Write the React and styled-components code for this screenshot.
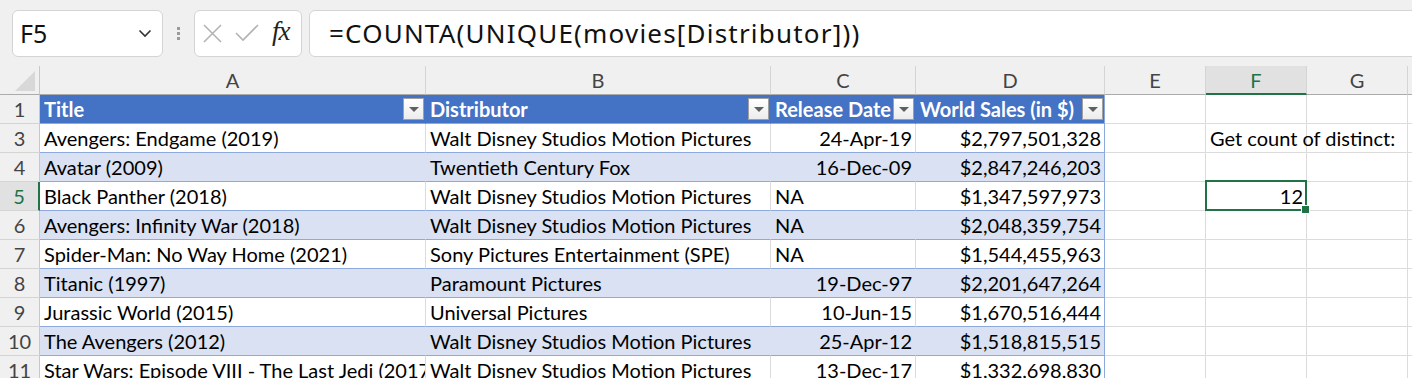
import React from 'react';
import styled, { createGlobalStyle } from 'styled-components';

const GlobalStyle = createGlobalStyle`
  html, body { margin: 0; padding: 0; background: #fff; overflow: hidden; }
  body { font-family: Lato, "Liberation Sans", sans-serif; }
`;

const GREEN = '#217346';

const rows = [
  ['3', 'Avengers: Endgame (2019)', 'Walt Disney Studios Motion Pictures', '24-Apr-19', '$2,797,501,328'],
  ['4', 'Avatar (2009)', 'Twentieth Century Fox', '16-Dec-09', '$2,847,246,203'],
  ['5', 'Black Panther (2018)', 'Walt Disney Studios Motion Pictures', 'NA', '$1,347,597,973'],
  ['6', 'Avengers: Infinity War (2018)', 'Walt Disney Studios Motion Pictures', 'NA', '$2,048,359,754'],
  ['7', 'Spider-Man: No Way Home (2021)', 'Sony Pictures Entertainment (SPE)', 'NA', '$1,544,455,963'],
  ['8', 'Titanic (1997)', 'Paramount Pictures', '19-Dec-97', '$2,201,647,264'],
  ['9', 'Jurassic World (2015)', 'Universal Pictures', '10-Jun-15', '$1,670,516,444'],
  ['10', 'The Avengers (2012)', 'Walt Disney Studios Motion Pictures', '25-Apr-12', '$1,518,815,515'],
  ['11', 'Star Wars: Episode VIII - The Last Jedi (2017)', 'Walt Disney Studios Motion Pictures', '13-Dec-17', '$1,332,698,830'],
];

const Toolbar = styled.div`
  display: flex;
  align-items: center;
  height: 66px;
  padding-left: 12px;
  background: #f0f0f0;
  overflow: hidden;
`;

const Box = styled.div`
  box-sizing: border-box;
  height: 47px;
  background: #fff;
  border: 1px solid #d4d4d4;
  border-radius: 6px;
  display: flex;
  align-items: center;
`;

const NameBox = styled(Box)`
  width: 151px;
  justify-content: space-between;
  padding: 0 10px 0 7px;
  font-family: "Noto Sans", "Open Sans", sans-serif;
  font-size: 25px;
  color: #111;
`;

const Dots = styled.div`
  display: flex;
  flex-direction: column;
  gap: 2px;
  margin: 0 14px;
  span { width: 3px; height: 3px; background: #9a9a9a; }
`;

const FxBox = styled(Box)`
  width: 108px;
  padding: 0 6px 0 8px;
  gap: 13px;
  margin-right: 7px;
`;

const Fx = styled.span`
  font-family: "Liberation Serif", "DejaVu Serif", serif;
  font-style: italic;
  font-size: 27px;
  color: #222;
  letter-spacing: -1px;
  margin-top: -4px;
`;

const FormulaBox = styled(Box)`
  flex: 1;
  margin-right: -10px;
  padding-left: 19px;
  font-family: "Noto Sans", "Open Sans", sans-serif;
  font-size: 26px;
  letter-spacing: 1.2px;
  color: #111;
  white-space: nowrap;
`;

const Sheet = styled.div`
  display: grid;
  grid-template-columns: 40px 386px 345px 145px 189px 101px 101px 101px 1fr;
  grid-auto-rows: 29px;
`;

const Corner = styled.div`
  box-sizing: border-box;
  background: #f0f0f0;
  border-right: 1px solid #c8c8c8;
  border-bottom: 1px solid #ababab;
  display: flex;
  align-items: flex-end;
  justify-content: flex-end;
  padding: 0 4px 3px 0;
`;

const ColHead = styled.div`
  box-sizing: border-box;
  display: flex;
  align-items: center;
  justify-content: center;
  font-size: 20px;
  color: ${p => (p.$active ? GREEN : '#444')};
  background: ${p => (p.$active ? '#e1e1e1' : '#f0f0f0')};
  border-right: 1px solid #d4d4d4;
  border-bottom: ${p => (p.$active ? `2px solid ${GREEN}` : '1px solid #ababab')};
`;

const RowHead = styled.div`
  box-sizing: border-box;
  display: flex;
  align-items: center;
  justify-content: center;
  font-size: 20px;
  color: ${p => (p.$active ? GREEN : '#444')};
  background: ${p => (p.$active ? '#e1e1e1' : '#f0f0f0')};
  border-right: ${p => (p.$active ? `2px solid ${GREEN}` : '1px solid #c8c8c8')};
  border-bottom: 1px solid #d4d4d4;
`;

const Cell = styled.div`
  position: ${p => (p.$active ? 'relative' : 'static')};
  z-index: ${p => (p.$active ? 2 : 'auto')};
  box-sizing: border-box;
  display: flex;
  align-items: center;
  justify-content: ${p => (p.$right ? 'flex-end' : 'flex-start')};
  padding: 0 3px 0 4px;
  white-space: nowrap;
  overflow: ${p => (p.$spill ? 'visible' : 'hidden')};
  font-size: 20px;
  color: #000;
  background: ${p => (p.$band ? '#d9e1f2' : 'transparent')};
  border-right: 1px solid ${p => (p.$edge ? '#8ea9db' : p.$band ? '#d9e1f2' : '#dcdcdc')};
  border-bottom: 1px solid ${p => (p.$table ? '#8ea9db' : '#dcdcdc')};
`;

const HeadCell = styled.div`
  box-sizing: border-box;
  display: flex;
  align-items: center;
  padding: 0 1px 0 4px;
  background: #4472c4;
  color: #fff;
  font-weight: 700;
  font-size: 20px;
  white-space: nowrap;
  overflow: hidden;
  border-right: 1px solid ${p => (p.$edge ? '#8ea9db' : '#4472c4')};
  border-bottom: 1px solid #8ea9db;
`;

const HeadLabel = styled.span`
  flex: 1;
  overflow: hidden;
`;

const FilterButton = styled.div`
  flex: none;
  box-sizing: border-box;
  width: 21px;
  height: 22px;
  border: 1px solid #a0a0a0;
  background: linear-gradient(#ffffff, #ececec);
  display: flex;
  align-items: center;
  justify-content: center;
  &::after {
    content: '';
    border-left: 5px solid transparent;
    border-right: 5px solid transparent;
    border-top: 5px solid #606060;
  }
`;

const Selection = styled.div`
  position: absolute;
  left: -1px;
  top: -2px;
  right: -1px;
  bottom: -1px;
  border: 2px solid ${GREEN};
  pointer-events: none;
`;

const Handle = styled.div`
  position: absolute;
  right: -5px;
  bottom: -5px;
  width: 7px;
  height: 7px;
  background: ${GREEN};
  border: 1px solid #fff;
`;

export default function App() {
  const letters = ['A', 'B', 'C', 'D', 'E', 'F', 'G', ''];
  const headers = ['Title', 'Distributor', 'Release Date', 'World Sales (in $)'];
  return (
    <>
      <GlobalStyle />
      <Toolbar>
        <NameBox>
          <span>F5</span>
          <svg width="14" height="9" viewBox="0 0 14 9">
            <path d="M1.5 1.5 L7 7 L12.5 1.5" fill="none" stroke="#333" strokeWidth="1.6" />
          </svg>
        </NameBox>
        <Dots><span /><span /><span /></Dots>
        <FxBox>
          <svg width="19" height="19" viewBox="0 0 19 19">
            <path d="M1 1 L18 18 M18 1 L1 18" stroke="#b3b3b3" strokeWidth="1.6" fill="none" />
          </svg>
          <svg width="24" height="18" viewBox="0 0 24 18">
            <path d="M1 9 L8 16 L23 1" stroke="#b3b3b3" strokeWidth="1.6" fill="none" />
          </svg>
          <Fx>fx</Fx>
        </FxBox>
        <FormulaBox>=COUNTA(UNIQUE(movies[Distributor]))</FormulaBox>
      </Toolbar>

      <Sheet>
        <Corner>
          <svg width="20" height="20" viewBox="0 0 20 20">
            <path d="M20 0 L20 20 L0 20 Z" fill="#d8d8d8" />
          </svg>
        </Corner>
        {letters.map((l, i) => (
          <ColHead key={i} $active={l === 'F'}>{l}</ColHead>
        ))}

        <RowHead>1</RowHead>
        {headers.map((h, i) => (
          <HeadCell key={h} $edge={i === 3}>
            <HeadLabel>{h}</HeadLabel>
            <FilterButton />
          </HeadCell>
        ))}
        <Cell />
        <Cell />
        <Cell />
        <Cell />

        {rows.map(([n, title, dist, date, sales], idx) => {
          const band = idx % 2 === 1;
          const isNA = date === 'NA';
          const active = n === '5';
          return (
            <React.Fragment key={n}>
              <RowHead $active={active}>{n}</RowHead>
              <Cell $table $band={band}>{title}</Cell>
              <Cell $table $band={band}>{dist}</Cell>
              <Cell $table $band={band} $right={!isNA}>{date}</Cell>
              <Cell $table $band={band} $edge $right>{sales}</Cell>
              <Cell />
              <Cell $spill={n === '3' || active} $right={active} $active={active}>
                {n === '3' && 'Get count of distinct:'}
                {active && '12'}
                {active && (
                  <Selection>
                    <Handle />
                  </Selection>
                )}
              </Cell>
              <Cell />
              <Cell />
            </React.Fragment>
          );
        })}
      </Sheet>
    </>
  );
}
